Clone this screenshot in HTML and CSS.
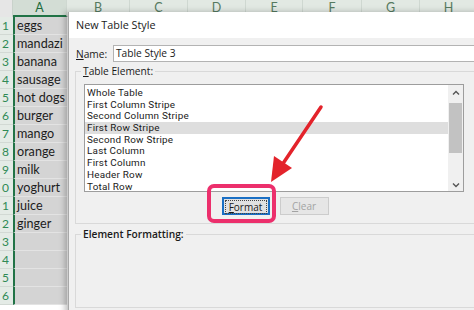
FILE: index.html
```html
<!DOCTYPE html>
<html>
<head>
<meta charset="utf-8">
<link rel="stylesheet" href="styles.css">
</head>
<body>
<div class="sheet">
  <div class="hdr">
    <div class="corner"></div>
    <div class="colh sel">A</div>
    <div class="colh">B</div>
    <div class="colh">C</div>
    <div class="colh">D</div>
    <div class="colh">E</div>
    <div class="colh">F</div>
    <div class="colh">G</div>
    <div class="colh">H</div>
  </div>
  <div class="row"><div class="rn">1</div><div class="cell">eggs</div></div>
  <div class="row"><div class="rn">2</div><div class="cell">mandazi</div></div>
  <div class="row"><div class="rn">3</div><div class="cell">banana</div></div>
  <div class="row"><div class="rn">4</div><div class="cell">sausage</div></div>
  <div class="row"><div class="rn">5</div><div class="cell">hot dogs</div></div>
  <div class="row"><div class="rn">6</div><div class="cell">burger</div></div>
  <div class="row"><div class="rn">7</div><div class="cell">mango</div></div>
  <div class="row"><div class="rn">8</div><div class="cell">orange</div></div>
  <div class="row"><div class="rn">9</div><div class="cell">milk</div></div>
  <div class="row"><div class="rn">0</div><div class="cell">yoghurt</div></div>
  <div class="row"><div class="rn">1</div><div class="cell">juice</div></div>
  <div class="row"><div class="rn">2</div><div class="cell">ginger</div></div>
  <div class="row"><div class="rn">3</div><div class="cell"></div></div>
  <div class="row"><div class="rn">4</div><div class="cell"></div></div>
  <div class="row"><div class="rn">5</div><div class="cell"></div></div>
  <div class="row"><div class="rn">6</div><div class="cell"></div></div>
</div>

<div class="dialog">
  <div class="titlebar">New Table Style</div>
  <div class="dbody">
    <div class="namerow">
      <span class="lbl"><u>N</u>ame:</span>
      <div class="input">Table Style 3</div>
    </div>
    <div class="group g1">
      <span class="glabel"><u>T</u>able Element:</span>
      <div class="listbox">
        <div class="items">
          <div class="item">Whole Table</div>
          <div class="item">First Column Stripe</div>
          <div class="item">Second Column Stripe</div>
          <div class="item hl">First Row Stripe</div>
          <div class="item">Second Row Stripe</div>
          <div class="item">Last Column</div>
          <div class="item">First Column</div>
          <div class="item">Header Row</div>
          <div class="item">Total Row</div>
        </div>
        <div class="scroll">
          <svg class="arr" width="14" height="12" viewBox="0 0 14 12"><path d="M4 7.5 L7 4.5 L10 7.5" fill="none" stroke="#555" stroke-width="1.4"/></svg>
          <div class="track"><div class="thumb"></div></div>
          <svg class="arr" width="14" height="12" viewBox="0 0 14 12"><path d="M4 4.5 L7 7.5 L10 4.5" fill="none" stroke="#555" stroke-width="1.4"/></svg>
        </div>
      </div>
      <div class="btns">
        <div class="btn primary"><span class="focus"><u>F</u>ormat</span></div>
        <div class="btn disabled"><u>C</u>lear</div>
      </div>
    </div>
    <div class="group g2">
      <span class="glabel strong">Element Formatting:</span>
    </div>
  </div>
</div>

<div class="highlight"></div>
<svg class="annot" width="474" height="310" viewBox="0 0 474 310">
  <line x1="321" y1="107" x2="282" y2="165" stroke="#e3232b" stroke-width="3.5" stroke-linecap="round"/>
  <polygon points="271,182 274,156 292,168" fill="#e3232b"/>
</svg>
</body>
</html>
```

FILE: styles.css
```css
html, body {
  margin: 0;
  padding: 0;
}
body {
  width: 474px;
  height: 310px;
  overflow: hidden;
  position: relative;
  background: #ffffff;
  font-family: "Open Sans", "Noto Sans", sans-serif;
}

/* spreadsheet */
.sheet {
  display: flex;
  flex-direction: column;
}
.hdr {
  display: grid;
  grid-template-columns: 13px 54px 63px 58px 58px 57px 59px 58px 58px;
  height: 17px;
  background: #e2e9e3;
  border-bottom: 1px solid #c9d2cb;
  box-sizing: border-box;
}
.corner {
  background: #e6e6e6;
  border-right: 1px solid #c9d2cb;
}
.colh {
  font-family: "Lato", "Liberation Sans", sans-serif;
  font-size: 12.5px;
  color: #567a60;
  text-align: center;
  line-height: 15px;
  border-right: 1px solid #cfd8d1;
}
.colh.sel {
  background: #d3ddd5;
  color: #1e6b3c;
  border-bottom: 2px solid #217346;
}
.row {
  display: flex;
  height: 18px;
}
.rn {
  width: 13px;
  box-sizing: border-box;
  background: #e4ebe6;
  border-bottom: 1px solid #d2d9d4;
  color: #2f8a55;
  font-family: "Lato", "Liberation Sans", sans-serif;
  font-size: 12px;
  line-height: 17px;
  text-align: center;
  padding-right: 2px;
}
.cell {
  width: 54px;
  box-sizing: border-box;
  background: #d4d4d4;
  border-left: 2px solid #217346;
  border-bottom: 1px solid #e3e3e3;
  font-family: "Lato", "Liberation Sans", sans-serif;
  font-size: 12.6px;
  line-height: 17px;
  color: #1c1c1c;
  padding-left: 2px;
  white-space: nowrap;
  overflow: hidden;
}

/* dialog */
.dialog {
  position: absolute;
  left: 68px;
  top: 12px;
  width: 420px;
  height: 310px;
  background: #f0f0f0;
  box-shadow: -3px 0 6px rgba(0,0,0,0.25);
  border-left: 1px solid #a8a8a8;
  box-sizing: border-box;
  font-size: 9.4px;
  color: #1a1a1a;
}
.titlebar {
  height: 26px;
  background: #ffffff;
  font-size: 10.8px;
  line-height: 26px;
  padding-left: 7px;
  color: #1a1a1a;
}
.dbody {
  display: flex;
  flex-direction: column;
}
.namerow {
  display: flex;
  align-items: center;
  margin-top: 7px;
  height: 17px;
}
.lbl {
  width: 37px;
  padding-left: 7px;
  font-size: 10.2px;
}
.input {
  flex: 1;
  height: 17px;
  box-sizing: border-box;
  background: #ffffff;
  border: 1px solid #b3b3b3;
  border-right: none;
  padding-left: 2px;
  font-size: 10.2px;
  line-height: 15px;
}
.group {
  position: relative;
  margin-left: 6px;
  width: 400px;
  box-sizing: border-box;
  border: 1px solid #d9d9d9;
}
.g1 {
  margin-top: 9px;
  height: 153px;
  padding: 12px 0 0 8px;
}
.g2 {
  margin-top: 10px;
  height: 74px;
}
.glabel {
  position: absolute;
  left: 5px;
  top: -7px;
  padding: 0 2px;
  background: #f0f0f0;
  font-size: 10.2px;
  line-height: 13px;
}
.glabel.strong {
  font-weight: 600;
}
.listbox {
  display: flex;
  width: 380px;
  height: 108px;
  box-sizing: border-box;
  background: #ffffff;
  border: 1px solid #9d9d9d;
}
.items {
  flex: 1;
  padding-top: 2px;
}
.item {
  height: 11.7px;
  line-height: 11.7px;
  padding-left: 2px;
  font-family: "Roboto", "Liberation Sans", sans-serif;
  font-size: 9.9px;
  letter-spacing: 0.22px;
  white-space: nowrap;
}
.item.hl {
  background: #dedede;
}
.scroll {
  width: 15px;
  background: #f0f0f0;
  display: flex;
  flex-direction: column;
  align-items: center;
}
.arr {
  flex: none;
  margin-top: 2px;
}
.track {
  flex: 1;
  width: 100%;
  padding: 4px 1px 0 1px;
  box-sizing: border-box;
}
.thumb {
  height: 50px;
  background: #c2c2c2;
}
.btns {
  display: flex;
  gap: 10px;
  justify-content: center;
  margin-top: 5px;
  padding-right: 8px;
}
.btn {
  width: 48px;
  height: 18px;
  box-sizing: border-box;
  background: #e1e1e1;
  border: 1px solid #adadad;
  font-size: 10px;
  text-align: center;
  line-height: 16px;
}
.btn.primary {
  border: 2px solid #1a6fc4;
  padding: 1px;
}
.focus {
  display: block;
  height: 12px;
  line-height: 12px;
  border: 1px dotted #444;
  box-sizing: content-box;
}
.btn.disabled {
  width: 49px;
  background: #e6e6e6;
  border-color: #cccccc;
  color: #a3a3a3;
}

/* annotations */
.highlight {
  position: absolute;
  left: 207px;
  top: 184px;
  width: 69px;
  height: 39px;
  box-sizing: border-box;
  border: 4px solid #ec2f6c;
  border-radius: 7px;
}
.annot {
  position: absolute;
  left: 0;
  top: 0;
}
```
